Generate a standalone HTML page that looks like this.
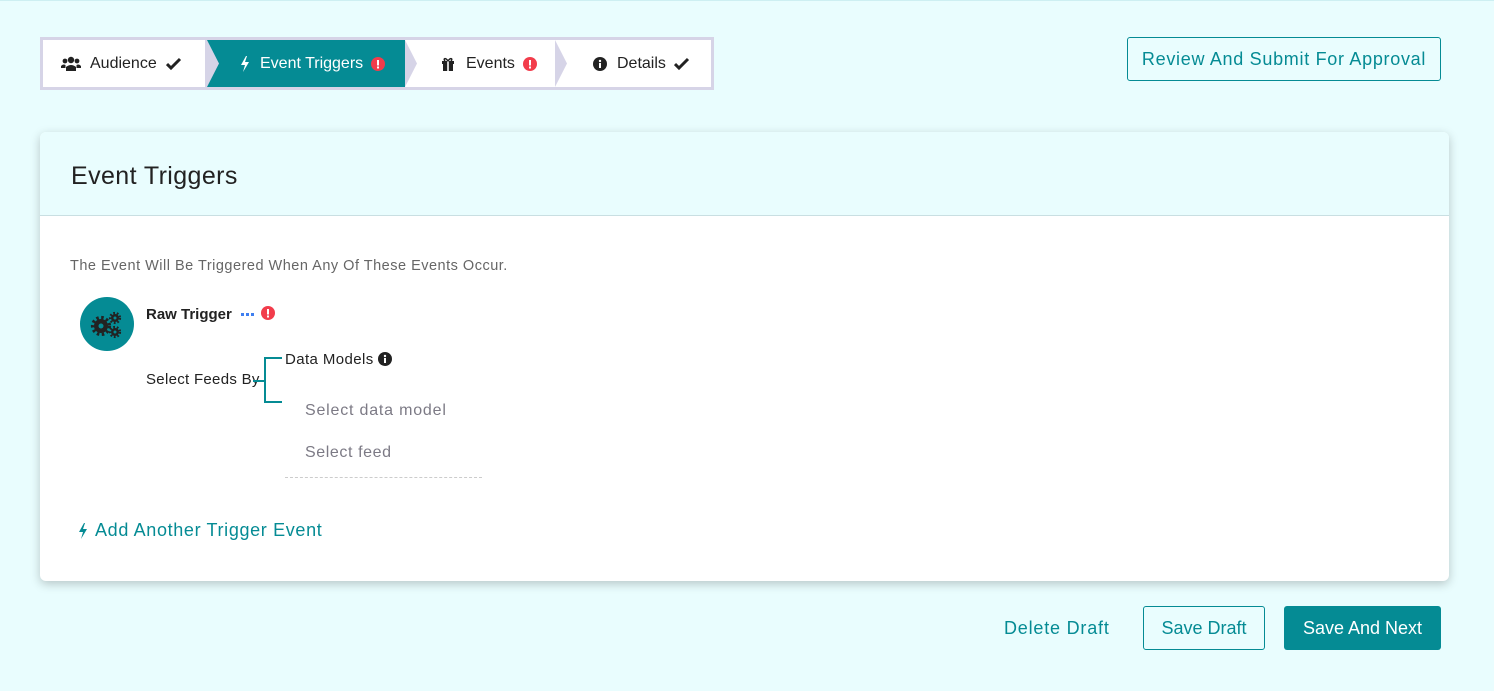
<!DOCTYPE html>
<html><head><style>
*{box-sizing:border-box;margin:0;padding:0}
body{width:1494px;height:691px;background:#e9fdfe;font-family:"Liberation Sans",sans-serif;position:relative;overflow:hidden;color:#222}
.abs{position:absolute}
.bc{left:40px;top:37px;width:674px;height:53px;border:3px solid #d6d4e7;background:#fff}
.seg{position:absolute;top:0;height:47px;display:flex;align-items:center;font-size:16px;color:#222}
.chev{position:absolute;top:0;width:14px;height:47px}
.btn{position:absolute;display:flex;align-items:center;justify-content:center;font-size:18px;border-radius:3px}
</style></head><body>
<div class="abs" style="left:0;top:0;width:1494px;height:1px;background:#cdeff2"></div>
<div class="abs bc">
 <div class="seg" style="left:0;width:162px;padding-left:18px">
  <svg width="20" height="16" viewBox="0 0 20 16" style="margin-right:9px"><circle cx="10" cy="4" r="3.2" fill="#222"/><circle cx="4" cy="5" r="2.4" fill="#222"/><circle cx="16" cy="5" r="2.4" fill="#222"/><path d="M5 15v-4q5-4 10 0v4z" fill="#222"/><path d="M0 12v-2q2-2.5 4.5-1v3z M20 12v-2q-2-2.5-4.5-1v3z" fill="#222"/></svg>Audience
  <svg width="16" height="14" viewBox="0 0 16 14" style="margin-left:9px"><path d="M1 7l4 4 9-9" stroke="#222" stroke-width="3" fill="none"/></svg>
 </div>
 <div class="seg" style="left:162px;width:200px;background:#058b94;color:#fff;padding-left:35px">
  <svg width="10" height="16" viewBox="0 0 10 16" style="margin-right:10px"><path d="M6 0L1 9h4l-2 7 6-10H5l2-6z" fill="#fff"/></svg>Event Triggers
  <svg width="14" height="14" viewBox="0 0 14 14" style="margin-left:8px"><circle cx="7" cy="7" r="7" fill="#f23c4b"/><rect x="6" y="3" width="2" height="5.5" fill="#fff"/><rect x="6" y="9.5" width="2" height="2" fill="#fff"/></svg>
 </div>
 <svg class="chev" style="left:162px" viewBox="0 0 14 47" preserveAspectRatio="none"><path d="M0 0h2l12 23.5L2 47H0z" fill="#d6d4e7"/></svg>
 <svg class="chev" style="left:362px" viewBox="0 0 14 47" preserveAspectRatio="none"><path d="M0 0l12 23.5L0 47z" fill="#d6d4e7"/></svg>
 <div class="seg" style="left:398px;width:114px">
  <svg width="14" height="14" viewBox="0 0 14 14" style="margin-right:11px"><rect x="1" y="4" width="12" height="3" fill="#222"/><rect x="2" y="7" width="10" height="7" fill="#222"/><rect x="6.2" y="4" width="1.6" height="10" fill="#fff"/><path d="M7 4C4 0 2 2 4 4M7 4c3-4 5-2 3 0" stroke="#222" stroke-width="1.5" fill="none"/></svg>Events
  <svg width="14" height="14" viewBox="0 0 14 14" style="margin-left:8px"><circle cx="7" cy="7" r="7" fill="#f23c4b"/><rect x="6" y="3" width="2" height="5.5" fill="#fff"/><rect x="6" y="9.5" width="2" height="2" fill="#fff"/></svg>
 </div>
 <svg class="chev" style="left:512px" viewBox="0 0 14 47" preserveAspectRatio="none"><path d="M0 0l12 23.5L0 47z" fill="#d6d4e7"/></svg>
 <div class="seg" style="left:550px;width:120px">
  <svg width="14" height="14" viewBox="0 0 14 14" style="margin-right:10px"><circle cx="7" cy="7" r="7" fill="#222"/><rect x="6" y="6" width="2" height="5" fill="#fff"/><circle cx="7" cy="4" r="1.2" fill="#fff"/></svg>Details
  <svg width="16" height="14" viewBox="0 0 16 14" style="margin-left:8px"><path d="M1 7l4 4 9-9" stroke="#222" stroke-width="3" fill="none"/></svg>
 </div>
</div>
<div class="btn" style="left:1127px;top:37px;width:314px;height:44px;border:1px solid #058b94;color:#058b94;letter-spacing:.7px">Review And Submit For Approval</div>

<div class="abs" style="left:40px;top:132px;width:1409px;height:449px;background:#fff;border-radius:6px;box-shadow:0 3px 10px rgba(0,0,0,.22);overflow:hidden">
 <div style="height:84px;background:#e9fdfe;border-bottom:1px solid #c9dfe2;padding:30px 0 0 31px;font-size:25px;color:#222;letter-spacing:.4px">Event Triggers</div>
 <div class="abs" style="left:30px;top:126px;font-size:14.5px;color:#666;letter-spacing:.5px">The Event Will Be Triggered When Any Of These Events Occur.</div>
 <div class="abs" style="left:40px;top:165px;width:54px;height:54px;border-radius:50%;background:#058b94">
  <svg width="54" height="54" viewBox="0 0 54 54"><g fill="#222"><circle cx="21" cy="29" r="7"/><circle cx="35" cy="21" r="4"/><circle cx="35" cy="35" r="4"/></g><g stroke="#222" stroke-width="3.2" stroke-dasharray="2.5 2.5"><circle cx="21" cy="29" r="8.5" fill="none"/><circle cx="35" cy="21" r="5" fill="none" stroke-width="2.2" stroke-dasharray="1.8 1.8"/><circle cx="35" cy="35" r="5" fill="none" stroke-width="2.2" stroke-dasharray="1.8 1.8"/></g><circle cx="21" cy="29" r="2.5" fill="#058b94"/><circle cx="35" cy="21" r="1.5" fill="#058b94"/><circle cx="35" cy="35" r="1.5" fill="#058b94"/></svg>
 </div>
 <div class="abs" style="left:106px;top:174px;font-size:15px;font-weight:bold;color:#222">Raw Trigger</div>
 <div class="abs" style="left:201px;top:181px;width:14px;height:3px;background:repeating-linear-gradient(90deg,#3f7ff0 0 3px,transparent 3px 5px)"></div>
 <svg class="abs" style="left:221px;top:174px" width="14" height="14" viewBox="0 0 14 14"><circle cx="7" cy="7" r="7" fill="#f23c4b"/><rect x="6" y="3" width="2" height="5.5" fill="#fff"/><rect x="6" y="9.5" width="2" height="2" fill="#fff"/></svg>
 <div class="abs" style="left:106px;top:239px;font-size:15px;color:#222;letter-spacing:.3px">Select Feeds By</div>
 <div class="abs" style="left:213px;top:248px;width:12px;height:2px;background:#058b94"></div>
 <div class="abs" style="left:224px;top:225px;width:18px;height:46px;border:2px solid #058b94;border-right:none"></div>
 <div class="abs" style="left:245px;top:219px;font-size:15px;color:#222;letter-spacing:.4px">Data Models</div>
 <svg class="abs" style="left:338px;top:220px" width="14" height="14" viewBox="0 0 14 14"><circle cx="7" cy="7" r="7" fill="#222"/><rect x="6" y="6" width="2" height="5" fill="#fff"/><circle cx="7" cy="4" r="1.2" fill="#fff"/></svg>
 <div class="abs" style="left:265px;top:270px;font-size:16px;color:#7c7a85;letter-spacing:.8px">Select data model</div>
 <div class="abs" style="left:265px;top:312px;font-size:16px;color:#7c7a85;letter-spacing:.6px">Select feed</div>
 <div class="abs" style="left:245px;top:345px;width:197px;border-top:1px dashed #ccc"></div>
 <div class="abs" style="left:38px;top:388px;font-size:18px;color:#058b94;display:flex;align-items:center;letter-spacing:.65px"><svg width="10" height="18" viewBox="0 0 10 16" style="margin-right:7px"><path d="M6 0L1 9h4l-2 7 6-10H5l2-6z" fill="#058b94"/></svg>Add Another Trigger Event</div>
</div>

<div class="abs" style="left:1004px;top:618px;font-size:18px;color:#058b94;letter-spacing:.8px">Delete Draft</div>
<div class="btn" style="left:1143px;top:606px;width:122px;height:44px;border:1px solid #058b94;color:#058b94">Save Draft</div>
<div class="btn" style="left:1284px;top:606px;width:157px;height:44px;background:#058b94;color:#fff">Save And Next</div>
</body></html>
